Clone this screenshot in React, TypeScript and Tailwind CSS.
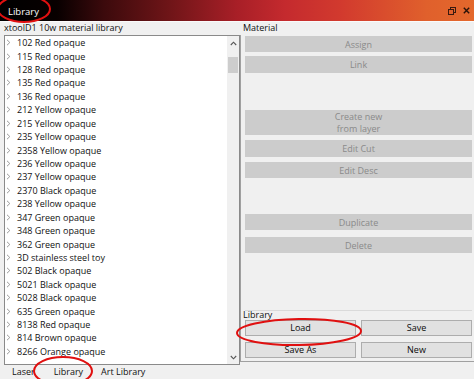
import React from "react";

const items = [
  "102 Red opaque",
  "115 Red opaque",
  "128 Red opaque",
  "135 Red opaque",
  "136 Red opaque",
  "212 Yellow opaque",
  "215 Yellow opaque",
  "235 Yellow opaque",
  "2358 Yellow opaque",
  "236 Yellow opaque",
  "237 Yellow opaque",
  "2370 Black opaque",
  "238 Yellow opaque",
  "347 Green opaque",
  "348 Green opaque",
  "362 Green opaque",
  "3D stainless steel toy",
  "502 Black opaque",
  "5021 Black opaque",
  "5028 Black opaque",
  "635 Green opaque",
  "8138 Red opaque",
  "814 Brown opaque",
  "8266 Orange opaque",
];

function Chevron() {
  return (
    <svg width="5" height="7" viewBox="0 0 5 7" className="shrink-0">
      <path d="M1 0.8 L3.8 3.5 L1 6.2" fill="none" stroke="#8f8f8f" strokeWidth="0.9" />
    </svg>
  );
}

function DisabledBtn({ label, h = "h-[16px]" }: { label: React.ReactNode; h?: string }) {
  return (
    <div className={`${h} bg-[#cccccc] flex items-center justify-center text-center text-[#8a8a8a] leading-[11px]`}>
      {label}
    </div>
  );
}

function Btn({ label }: { label: string }) {
  return (
    <div className="h-[16px] flex-1 bg-[#e1e1e1] border border-[#adadad] flex items-center justify-center text-[#0a0a0a]">
      {label}
    </div>
  );
}

export default function App() {
  return (
    <div className="relative w-[474px] h-[379px] overflow-hidden bg-[#f0f0f0] font-['Open_Sans',sans-serif] text-[9px] text-[#111111]">
      {/* title bar */}
      <div className="h-[21px] flex items-center justify-between pl-[8px] pr-[4px] bg-[linear-gradient(90deg,#000000_0%,#080000_12%,#3c0a0c_22%,#701518_36%,#a81f27_50%,#c42a2e_60%,#d23a2e_72%,#e0602c_90%,#e4682c_100%)]">
        <span className="text-white text-[9.5px] leading-none pt-[2px]">Library</span>
        <div className="flex items-center gap-[7px]">
          <svg width="8" height="8" viewBox="0 0 8 8">
            <rect x="2.5" y="0.5" width="5" height="5" fill="none" stroke="#3a1a10" strokeWidth="1" />
            <rect x="0.5" y="2.5" width="5" height="5" fill="#e0602c" stroke="#3a1a10" strokeWidth="1" />
          </svg>
          <svg width="7" height="7" viewBox="0 0 7 7">
            <path d="M0.8 0.8 L6.2 6.2 M6.2 0.8 L0.8 6.2" stroke="#2a1208" strokeWidth="1.4" />
          </svg>
        </div>
      </div>
      <div className="h-px bg-[#fafafa]" />

      <div className="flex h-[357px]">
        {/* left column */}
        <div className="w-[240px] flex flex-col pl-[4px]">
          <div className="h-[13px] leading-[11px]">xtoolD1 10w material library</div>
          <div className="h-[330px] border border-[#8a8a8a] bg-white flex">
            <div className="flex-1 flex flex-col">
              {items.map((it) => (
                <div key={it} className="h-[13.43px] flex items-center pl-[1px]">
                  <Chevron />
                  <span className="ml-[6px] leading-none whitespace-nowrap">{it}</span>
                </div>
              ))}
            </div>
            <div className="w-[12px] bg-[#f0f0f0] flex flex-col items-center">
              <div className="h-[14px] flex items-center justify-center">
                <svg width="7" height="5" viewBox="0 0 7 5">
                  <path d="M0.8 4 L3.5 1.2 L6.2 4" fill="none" stroke="#555" strokeWidth="1.1" />
                </svg>
              </div>
              <div className="mt-[7px] w-[10px] h-[16px] bg-[#cdcdcd]" />
              <div className="flex-1" />
              <div className="h-[14px] flex items-center justify-center">
                <svg width="7" height="5" viewBox="0 0 7 5">
                  <path d="M0.8 1 L3.5 3.8 L6.2 1" fill="none" stroke="#555" strokeWidth="1.1" />
                </svg>
              </div>
            </div>
          </div>
          <div className="h-[14px] flex items-center">
            <span className="ml-[8px]">Laser</span>
            <span className="ml-[19px]">Library</span>
            <span className="ml-[18px]">Art Library</span>
          </div>
        </div>

        {/* right column */}
        <div className="flex-1 flex flex-col">
          <div className="h-[13px] leading-[11px] pl-[3px]">Material</div>
          <div className="h-[327px] border-l border-b border-[#a0a0a0] flex flex-col pl-[4px] pr-[2px] pt-[1px]">
            <DisabledBtn label="Assign" />
            <div className="h-[4px]" />
            <DisabledBtn label="Link" h="h-[17px]" />
            <div className="h-[37px]" />
            <DisabledBtn
              h="h-[25px]"
              label={
                <span className="block leading-[12.4px] pt-[1px]">
                  Create new
                  <br />
                  from layer
                </span>
              }
            />
            <div className="h-[5px]" />
            <DisabledBtn label="Edit Cut" h="h-[17px]" />
            <div className="h-[5px]" />
            <DisabledBtn label="Edit Desc" />
            <div className="h-[36px]" />
            <DisabledBtn label="Duplicate" />
            <div className="h-[7px]" />
            <DisabledBtn label="Delete" />
            <div className="h-[58px] border-b border-[#dadada]" />
            <div className="h-[8px] leading-[8px] -ml-[4px] pl-[2px]">Library</div>
            <div className="flex gap-[5px] mt-[1px]">
              <Btn label="Load" />
              <Btn label="Save" />
            </div>
            <div className="flex gap-[5px] mt-[6px]">
              <Btn label="Save As" />
              <Btn label="New" />
            </div>
          </div>
        </div>
      </div>

      {/* red annotation ellipses */}
      <svg className="absolute inset-0 pointer-events-none" width="474" height="379" viewBox="0 0 474 379">
        <ellipse cx="24" cy="9" rx="26" ry="13" fill="none" stroke="#e01010" strokeWidth="2" />
        <ellipse cx="299" cy="332" rx="62" ry="13" fill="none" stroke="#e01010" strokeWidth="2" transform="rotate(-1 299 332)" />
        <ellipse cx="63" cy="371" rx="29" ry="14" fill="none" stroke="#e01010" strokeWidth="2" />
      </svg>
    </div>
  );
}
